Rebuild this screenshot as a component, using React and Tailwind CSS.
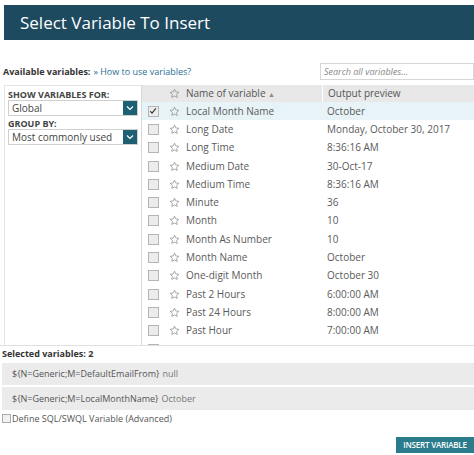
import React from "react";

const rows = [
  ["Local Month Name", "October", true],
  ["Long Date", "Monday, October 30, 2017"],
  ["Long Time", "8:36:16 AM"],
  ["Medium Date", "30-Oct-17"],
  ["Medium Time", "8:36:16 AM"],
  ["Minute", "36"],
  ["Month", "10"],
  ["Month As Number", "10"],
  ["Month Name", "October"],
  ["One-digit Month", "October 30"],
  ["Past 2 Hours", "6:00:00 AM"],
  ["Past 24 Hours", "8:00:00 AM"],
  ["Past Hour", "7:00:00 AM"],
  ["", ""],
];

const Star = () => (
  <svg width="11" height="11" viewBox="0 0 24 24" fill="none" stroke="#8a8a8a" strokeWidth="1.6" strokeLinejoin="round">
    <path d="M12 2.5l2.9 6.1 6.6.8-4.9 4.6 1.3 6.6L12 17.3l-5.9 3.3 1.3-6.6-4.9-4.6 6.6-.8z" />
  </svg>
);

const Check = ({ checked }) => (
  <span className="w-[11px] h-[11px] border border-[#b5b5b5] bg-[#ececec] flex items-center justify-center">
    {checked && (
      <svg width="8" height="8" viewBox="0 0 10 10" fill="none" stroke="#333" strokeWidth="1.4">
        <path d="M1.5 5.2l2.3 2.4L8.6 1.8" />
      </svg>
    )}
  </span>
);

const Select = ({ value }) => (
  <div className="flex h-[16px] border border-[#cfcfcf] bg-white">
    <span className="flex-1 px-[3px] leading-[14px] text-[10px] text-[#444]">{value}</span>
    <span className="w-[14px] bg-[#1e5f74] flex items-center justify-center">
      <svg width="8" height="6" viewBox="0 0 8 6" fill="none" stroke="#fff" strokeWidth="1.2">
        <path d="M1 1.5l3 3 3-3" />
      </svg>
    </span>
  </div>
);

export default function App() {
  return (
    <div className="w-[474px] h-[455px] bg-white overflow-hidden font-['Open_Sans',sans-serif] text-[#444]">
      <div className="mt-[5px] ml-[4px] h-[35px] bg-[#1e4a5f] flex items-center pl-[16px]">
        <span className="text-white text-[17px]">Select Variable To Insert</span>
      </div>

      <div className="mt-[23px] flex items-center h-[17px] pl-[3px]">
        <span className="text-[9px] font-bold text-[#333]">Available variables:</span>
        <span className="text-[9px] text-[#2a6f94] ml-[3px]">» How to use variables?</span>
        <div className="ml-auto w-[154px] h-[17px] border border-[#d6d6d6] px-[3px] text-[9px] italic text-[#888] leading-[15px]">
          Search all variables...
        </div>
      </div>

      <div className="flex mt-[5px] ml-[4px] h-[260px]">
        <div className="w-[137px] border-t border-l border-[#e3e3e3] px-[3px] pt-[3px]">
          <div className="text-[9px] font-bold text-[#444] leading-[11px]">SHOW VARIABLES FOR:</div>
          <Select value="Global" />
          <div className="text-[9px] font-bold text-[#444] leading-[11px] mt-[2px]">GROUP BY:</div>
          <Select value="Most commonly used" />
        </div>
        <div className="flex-1 border-l border-[#d8d8d8] overflow-hidden">
          <div className="flex h-[17px] bg-[#e8e8e8] items-center text-[10px] text-[#555]">
            <span className="w-[20px]" />
            <span className="w-[24px] flex justify-center"><Star /></span>
            <span className="w-[136px]">Name of variable <span className="text-[7px] text-[#888]">▲</span></span>
            <span className="flex-1 pl-[5px] border-l border-white h-full flex items-center">Output preview</span>
          </div>
          {rows.map(([name, value, checked], i) => (
            <div
              key={i}
              className={`flex h-[18.3px] items-center text-[10px] text-[#5a5a5a] ${checked ? "bg-[#e8f3f8]" : ""}`}
            >
              <span className="w-[20px] flex justify-center pl-[2px]"><Check checked={checked} /></span>
              <span className="w-[24px] flex justify-center"><Star /></span>
              <span className="w-[136px]">{name}</span>
              <span className="flex-1 pl-[5px]">{value}</span>
            </div>
          ))}
        </div>
      </div>

      <div className="border-t border-[#e0e0e0]" />
      <div className="pl-[2px] text-[9px] font-bold text-[#333] mt-[1px] leading-[13px]">Selected variables: 2</div>
      <div className="mt-[3px] ml-[2px] flex flex-col gap-[2px]">
        <div className="h-[22px] bg-[#ebebeb] flex items-center pl-[10px] text-[9px] text-[#555]">
          {"${N=Generic;M=DefaultEmailFrom}"}<span className="ml-[3px] text-[#777]">null</span>
        </div>
        <div className="h-[23px] bg-[#ebebeb] flex items-center pl-[10px] text-[9px] text-[#555]">
          {"${N=Generic;M=LocalMonthName}"}<span className="ml-[3px] text-[#777]">October</span>
        </div>
      </div>
      <div className="flex items-center mt-[2px] pl-[2px] text-[9px] text-[#555]">
        <span className="w-[9px] h-[9px] border border-[#aaa] bg-[#f1f1f1]" />
        <span className="ml-[1px]">Define SQL/SWQL Variable (Advanced)</span>
      </div>
      <div className="flex justify-end mt-[11px]">
        <div className="w-[78px] h-[16px] bg-[#2a7c8c] text-white text-[8px] font-semibold flex items-center justify-center tracking-[-0.2px]">
          INSERT VARIABLE
        </div>
      </div>
    </div>
  );
}
